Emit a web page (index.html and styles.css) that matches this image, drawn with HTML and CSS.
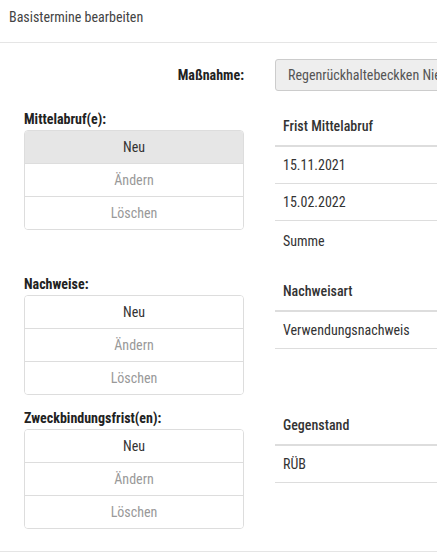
FILE: index.html
```html
<!DOCTYPE html>
<html lang="de">
<head>
<meta charset="utf-8">
<title>Basistermine bearbeiten</title>
<link rel="stylesheet" href="styles.css">
</head>
<body>
<div class="page">
  <header class="topbar">Basistermine bearbeiten</header>
  <main class="content">
    <div class="section measure">
      <label class="side-label">Maßnahme:</label>
      <div class="field">Regenrückhaltebeckken Niederdorf</div>
    </div>

    <section class="section">
      <div class="actions">
        <div class="group-label">Mittelabruf(e):</div>
        <div class="btn-group">
          <button class="btn active">Neu</button>
          <button class="btn" disabled>Ändern</button>
          <button class="btn" disabled>Löschen</button>
        </div>
      </div>
      <table class="grid">
        <thead><tr><th>Frist Mittelabruf</th></tr></thead>
        <tbody>
          <tr><td>15.11.2021</td></tr>
          <tr><td>15.02.2022</td></tr>
        </tbody>
        <tfoot><tr><td>Summe</td></tr></tfoot>
      </table>
    </section>

    <section class="section">
      <div class="actions">
        <div class="group-label">Nachweise:</div>
        <div class="btn-group">
          <button class="btn">Neu</button>
          <button class="btn" disabled>Ändern</button>
          <button class="btn" disabled>Löschen</button>
        </div>
      </div>
      <table class="grid">
        <thead><tr><th>Nachweisart</th></tr></thead>
        <tbody>
          <tr><td>Verwendungsnachweis</td></tr>
        </tbody>
      </table>
    </section>

    <section class="section">
      <div class="actions">
        <div class="group-label">Zweckbindungsfrist(en):</div>
        <div class="btn-group">
          <button class="btn">Neu</button>
          <button class="btn" disabled>Ändern</button>
          <button class="btn" disabled>Löschen</button>
        </div>
      </div>
      <table class="grid">
        <thead><tr><th>Gegenstand</th></tr></thead>
        <tbody>
          <tr><td>RÜB</td></tr>
        </tbody>
      </table>
    </section>
  </main>
  <footer class="bottom"></footer>
</div>
</body>
</html>
```

FILE: styles.css
```css
html, body {
  margin: 0;
  padding: 0;
  background: #fff;
}

body {
  font-family: "Roboto Condensed", Roboto, "Liberation Sans", sans-serif;
  font-size: 14px;
  color: #333;
  overflow: hidden;
}

.page {
  width: 437px;
  overflow: hidden;
}

.topbar {
  height: 43px;
  box-sizing: border-box;
  padding: 7px 9px 0;
  line-height: 20px;
  color: #444;
  border-bottom: 1px solid #e5e5e5;
}

.content {
  padding: 16px 0 11px 24px;
}

.section {
  display: grid;
  grid-template-columns: 220px 300px;
  column-gap: 31px;
  align-items: start;
  margin-bottom: 11px;
}

.section.measure {
  margin-bottom: 16px;
  align-items: center;
}

.side-label {
  text-align: right;
  font-weight: 700;
  color: #222;
}

.field {
  height: 32px;
  box-sizing: border-box;
  border: 1px solid #ccc;
  border-radius: 3px;
  background: #eee;
  color: #555;
  line-height: 30px;
  padding: 0 12px;
  white-space: nowrap;
  overflow: hidden;
}

.actions {
  padding-top: 4px;
}

.group-label {
  font-weight: 700;
  color: #222;
  line-height: 16px;
  margin-bottom: 3px;
}

.btn-group {
  display: flex;
  flex-direction: column;
  border: 1px solid #ddd;
  border-radius: 4px;
  overflow: hidden;
}

.btn {
  height: 33px;
  margin: 0;
  padding: 0;
  border: 0;
  border-top: 1px solid #ddd;
  background: #fff;
  font: inherit;
  color: #333;
  text-align: center;
}

.btn:first-child {
  height: 32px;
  border-top: 0;
}

.btn.active {
  background: #e6e6e6;
}

.btn:disabled {
  color: #999;
}

.grid {
  width: 100%;
  border-collapse: collapse;
}

.grid th {
  height: 38px;
  padding: 0 8px;
  text-align: left;
  font-weight: 500;
  color: #333;
  border-bottom: 2px solid #ddd;
}

.grid td {
  padding: 0 8px;
  color: #333;
}

.grid tbody td {
  height: 36px;
  border-bottom: 1px solid #ddd;
}

.grid tfoot td {
  height: 40px;
  border: 0;
}

.bottom {
  border-top: 1px solid #e5e5e5;
  height: 10px;
}
```
